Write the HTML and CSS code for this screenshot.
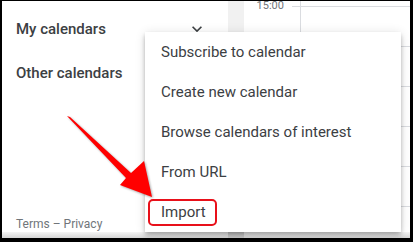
FILE: index.html
```html
<!DOCTYPE html>
<html lang="en">
<head>
    <meta charset="UTF-8">
    <meta name="viewport" content="width=device-width, initial-scale=1.0">
    <title>Calendar - Add calendar menu</title>
    <link rel="stylesheet" href="styles.css">
</head>
<body>
    <div class="screen">
        <div class="app">
            <aside class="sidebar">
                <div class="cal-row">
                    <span>My calendars</span>
                    <svg class="chevron" viewBox="0 0 24 24" width="20" height="20"><path d="M16.59 8.59L12 13.17 7.41 8.59 6 10l6 6 6-6z"/></svg>
                </div>
                <div class="cal-row">
                    <span>Other calendars</span>
                </div>
                <div class="footer-links">Terms &ndash; Privacy</div>
            </aside>
            <div class="scroll-track"></div>
            <section class="grid">
                <div class="gutter">
                    <span class="time">15:00</span>
                    <div class="ticks"></div>
                </div>
                <div class="day"></div>
            </section>
        </div>
        <div class="hscroll">
            <span class="scroll-btn"></span>
        </div>

        <!-- add calendar popup -->
        <ul class="menu">
            <li>Subscribe to calendar</li>
            <li>Create new calendar</li>
            <li>Browse calendars of interest</li>
            <li>From URL</li>
            <li><span class="highlight">Import</span></li>
        </ul>

        <svg class="arrow" width="413" height="242" viewBox="0 0 413 242">
            <polygon points="67,116 70,117 131,173 144,161 152,197 120,185 126,178"/>
        </svg>
    </div>
</body>
</html>
```

FILE: styles.css
```css
body {
    margin: 0;
    font-family: Roboto, Arial, sans-serif;
    background-color: #fff;
}
.screen {
    position: relative;
    width: 413px;
    height: 242px;
    box-sizing: border-box;
    border-style: solid;
    border-color: #000;
    border-width: 1px 3px 4px 2px;
    display: flex;
    flex-direction: column;
    overflow: hidden;
    background-color: #fff;
}
.app {
    flex: 1;
    display: flex;
    min-height: 0;
}
.sidebar {
    width: 226px;
    padding: 6px 21px 0 14px;
    box-sizing: border-box;
    display: flex;
    flex-direction: column;
}
.cal-row {
    height: 44px;
    display: flex;
    align-items: center;
    justify-content: space-between;
    font-size: 15px;
    font-weight: 500;
    color: #3c4043;
}
.chevron {
    fill: #3c4043;
}
.footer-links {
    margin-top: auto;
    line-height: 16px;
    font-size: 12px;
    color: #70757a;
}
.scroll-track {
    width: 16px;
    background-color: #f1f1f1;
}
.grid {
    flex: 1;
    display: flex;
}
.gutter {
    width: 56px;
    display: flex;
    justify-content: flex-end;
}
.time {
    margin-top: -1px;
    margin-right: 8px;
    line-height: 12px;
    height: 12px;
    font-size: 11px;
    color: #70757a;
}
.ticks {
    width: 8px;
    background: repeating-linear-gradient(to bottom, #dadce0 0, #dadce0 1px, transparent 1px, transparent 40px);
    background-position: 0 5px;
}
.day {
    flex: 1;
    border-left: 1px solid #dadce0;
    background: repeating-linear-gradient(to bottom, #dadce0 0, #dadce0 1px, transparent 1px, transparent 40px);
    background-position: 0 5px;
}
.hscroll {
    height: 6px;
    background: linear-gradient(to bottom, #f4f4f4, #d6d6d6);
    padding-left: 226px;
}
.scroll-btn {
    display: block;
    width: 16px;
    height: 6px;
    background-color: #c8c8c8;
}
.menu {
    position: absolute;
    left: 143px;
    top: 31px;
    width: 256px;
    margin: 0;
    padding: 0;
    list-style: none;
    background-color: #fff;
    box-shadow: 0 4px 5px rgba(0, 0, 0, 0.14), 0 1px 10px rgba(0, 0, 0, 0.12), 0 2px 4px -1px rgba(0, 0, 0, 0.2);
}
.menu li {
    height: 40px;
    padding-left: 16px;
    display: flex;
    align-items: center;
    font-size: 15px;
    color: #3c4043;
}
.highlight {
    margin-left: -13px;
    padding: 2px 9px 2px 11px;
    line-height: 19px;
    border: 2px solid #e8101a;
    border-radius: 5px;
}
.arrow {
    position: absolute;
    left: -2px;
    top: -1px;
    fill: #ff0000;
    filter: drop-shadow(1px 1px 1px rgba(0, 0, 0, 0.35));
}
```
